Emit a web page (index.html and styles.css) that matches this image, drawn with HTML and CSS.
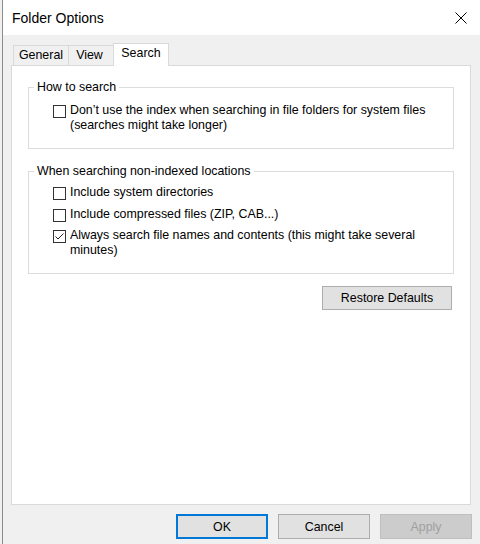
FILE: index.html
```html
<!DOCTYPE html>
<html lang="en">
<head>
<meta charset="utf-8">
<title>Folder Options</title>
<link rel="stylesheet" href="styles.css">
</head>
<body>
<div class="window">
  <div class="titlebar">
    <span class="title">Folder Options</span>
    <svg class="close" width="12" height="12" viewBox="0 0 12 12" aria-hidden="true">
      <path d="M0.5 0.5 L11.5 11.5 M11.5 0.5 L0.5 11.5" stroke="#000" stroke-width="1" fill="none"/>
    </svg>
  </div>
  <div class="client">
    <div class="tabs">
      <div class="tab tab-general">General</div>
      <div class="tab tab-view">View</div>
      <div class="tab tab-search active">Search</div>
    </div>
    <div class="panel">
      <fieldset class="group group-how">
        <legend>How to search</legend>
        <label class="check first">
          <span class="box"></span>
          <span class="lbl">Don’t use the index when searching in file folders for system files<br>(searches might take longer)</span>
        </label>
      </fieldset>
      <fieldset class="group group-when">
        <legend>When searching non-indexed locations</legend>
        <label class="check first">
          <span class="box"></span>
          <span class="lbl">Include system directories</span>
        </label>
        <label class="check">
          <span class="box"></span>
          <span class="lbl">Include compressed files (ZIP, CAB...)</span>
        </label>
        <label class="check">
          <span class="box checked">
            <svg width="11" height="11" viewBox="0 0 11 11" aria-hidden="true"><path d="M1.5 5.5 L4 8 L9.5 2.5" stroke="#222" stroke-width="1" fill="none"/></svg>
          </span>
          <span class="lbl">Always search file names and contents (this might take several<br>minutes)</span>
        </label>
      </fieldset>
      <div class="restore-row">
        <button class="btn restore">Restore Defaults</button>
      </div>
    </div>
    <div class="footer">
      <button class="btn default">OK</button>
      <button class="btn">Cancel</button>
      <button class="btn disabled">Apply</button>
    </div>
  </div>
</div>
</body>
</html>
```

FILE: styles.css
```css
html, body {
  margin: 0;
  padding: 0;
}
body {
  width: 480px;
  height: 544px;
  overflow: hidden;
  background: #f0f0f0;
  font-family: "Liberation Sans", Arial, sans-serif;
  font-size: 12.4px;
  color: #000;
}
.window {
  margin-left: 2px;
  height: 544px;
  border-left: 1px solid #8c8c8c;
  box-sizing: border-box;
  background: #f0f0f0;
}
.titlebar {
  height: 35px;
  background: #fff;
  display: flex;
  align-items: center;
  padding-left: 9px;
}
.title {
  font-size: 14px;
  line-height: 16px;
  margin-top: 1px;
}
.close {
  margin-left: auto;
  margin-right: 13px;
  margin-top: 1px;
}
.client {
  padding-top: 8px;
}
.tabs {
  display: flex;
  align-items: flex-end;
  height: 22px;
  margin-left: 10px;
}
.tab {
  box-sizing: border-box;
  height: 20px;
  border: 1px solid #d9d9d9;
  border-bottom: none;
  background: #f0f0f0;
  display: flex;
  align-items: center;
  justify-content: center;
  line-height: 15px;
  margin-left: -1px;
}
.tab-general { width: 56px; margin-left: 0; }
.tab-view { width: 46px; padding-right: 3px; }
.tab-search { width: 56px; }
.tab.active {
  height: 23px;
  margin-bottom: -1px;
  background: #fff;
  position: relative;
  z-index: 1;
  padding-bottom: 3px;
}
.panel {
  box-sizing: border-box;
  margin-left: 8px;
  width: 460px;
  height: 440px;
  background: #fff;
  border: 1px solid #d9d9d9;
  padding: 14px 16px 0 16px;
}
.group {
  margin: 0;
  padding: 0 0 15px 0;
  border: 1px solid #dcdcdc;
  min-width: 0;
}
.group legend {
  margin-left: 5px;
  padding: 0 3px;
  line-height: 15px;
}
.group-when {
  margin-top: 15px;
}
.check {
  display: flex;
  align-items: flex-start;
  margin-left: 24px;
  line-height: 15px;
  margin-top: 6.5px;
}
.group-how .check.first {
  margin-top: 8px;
}
.group-when .check.first {
  margin-top: 6px;
}
.box {
  box-sizing: border-box;
  flex: none;
  width: 13px;
  height: 13px;
  border: 1px solid #333;
  background: #fff;
  margin-top: 2px;
  margin-right: 4px;
  display: flex;
  align-items: center;
  justify-content: center;
}
.box svg {
  display: block;
}
.restore-row {
  display: flex;
  justify-content: flex-end;
  margin-top: 12px;
  margin-right: 2px;
}
.btn {
  box-sizing: border-box;
  font-family: "Liberation Sans", Arial, sans-serif;
  font-size: 12.4px;
  color: #000;
  background: #e1e1e1;
  border: 1px solid #adadad;
  border-radius: 0;
  height: 24px;
  width: 92px;
  padding: 0;
  margin: 0;
}
.btn.restore {
  width: 130px;
}
.btn.default {
  border: 2px solid #0078d7;
}
.btn.disabled {
  background: #cccccc;
  border-color: #bfbfbf;
  color: #a0a0a0;
}
.footer {
  display: flex;
  justify-content: flex-end;
  gap: 10px;
  padding-top: 9px;
  padding-right: 8px;
}
.footer .btn {
  height: 25px;
}
```
